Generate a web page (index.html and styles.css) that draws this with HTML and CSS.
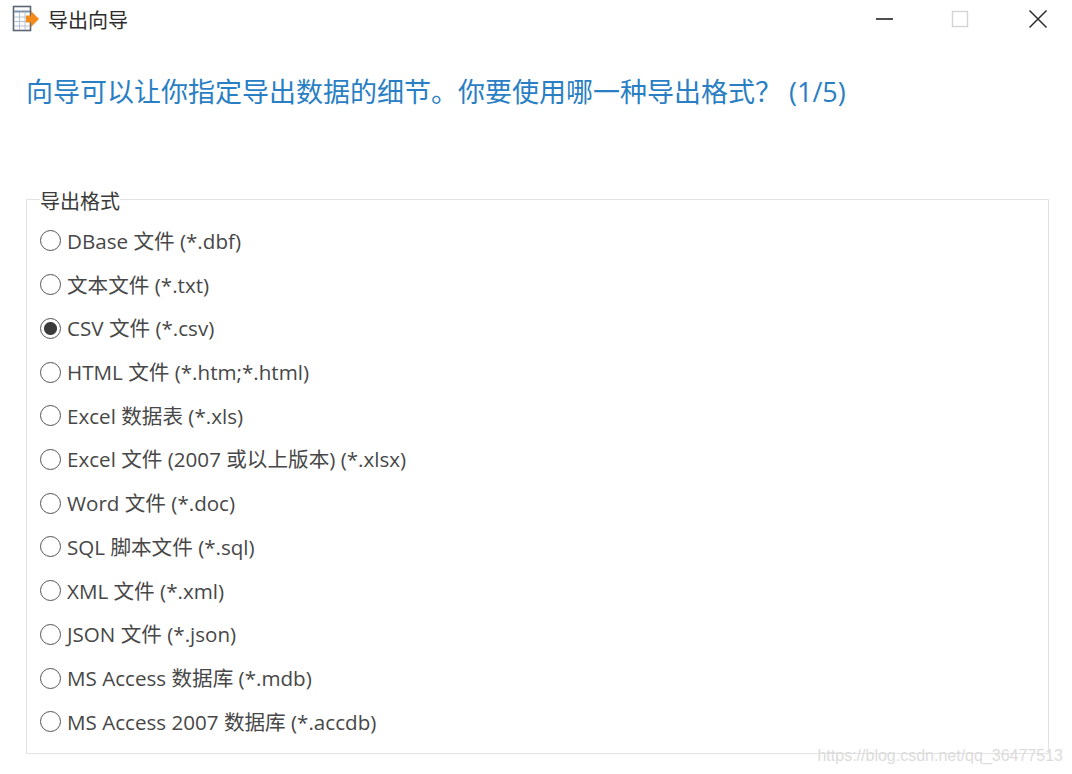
FILE: index.html
```html
<!DOCTYPE html>
<html lang="zh-CN">
<head>
<meta charset="utf-8">
<title>导出向导</title>
<link rel="stylesheet" href="styles.css">
</head>
<body>
<div class="window">
  <header class="titlebar">
    <svg class="app-icon" width="28" height="28" viewBox="0 0 28 28">
      <rect x="1.500" y="1.500" width="17" height="24" fill="#fff" stroke="#5b6571" stroke-width="1.600"/>
      <path d="M2 6.500h16" stroke="#7f93ab" stroke-width="2"/>
      <path d="M2 12h16M2 16.500h16M2 21h16M7.500 7v18M13 7v18" stroke="#b4c0cf" stroke-width="1"/>
      <path d="M14 10.500h5V6l8 8-8 8v-4.500h-5z" fill="#f28a1c"/>
    </svg>
    <span class="title">导出向导</span>
    <div class="controls">
      <svg class="ctl ctl-min" width="20" height="20" viewBox="0 0 20 20"><path d="M1 10h17" stroke="#222" stroke-width="1.600"/></svg>
      <svg class="ctl" width="20" height="20" viewBox="0 0 20 20"><rect x="2.500" y="2.500" width="15" height="15" fill="none" stroke="#d4d4d4" stroke-width="1.400"/></svg>
      <svg class="ctl" width="20" height="20" viewBox="0 0 20 20"><path d="M1.500 1.500l17 17M18.500 1.500l-17 17" fill="none" stroke="#2a2a2a" stroke-width="1.500"/></svg>
    </div>
  </header>
  <h1 class="heading">向导可以让你指定导出数据的细节。你要使用哪一种导出格式？ (1/5)</h1>
  <fieldset class="group">
    <legend class="legend">导出格式</legend>
    <label class="opt"><span class="radio"></span>DBase 文件 (*.dbf)</label>
    <label class="opt"><span class="radio"></span>文本文件 (*.txt)</label>
    <label class="opt"><span class="radio on"></span>CSV 文件 (*.csv)</label>
    <label class="opt"><span class="radio"></span>HTML 文件 (*.htm;*.html)</label>
    <label class="opt"><span class="radio"></span>Excel 数据表 (*.xls)</label>
    <label class="opt"><span class="radio"></span>Excel 文件 (2007 或以上版本) (*.xlsx)</label>
    <label class="opt"><span class="radio"></span>Word 文件 (*.doc)</label>
    <label class="opt"><span class="radio"></span>SQL 脚本文件 (*.sql)</label>
    <label class="opt"><span class="radio"></span>XML 文件 (*.xml)</label>
    <label class="opt"><span class="radio"></span>JSON 文件 (*.json)</label>
    <label class="opt"><span class="radio"></span>MS Access 数据库 (*.mdb)</label>
    <label class="opt"><span class="radio"></span>MS Access 2007 数据库 (*.accdb)</label>
  </fieldset>
  <div class="watermark">https://blog.csdn.net/qq_36477513</div>
</div>
</body>
</html>
```
FILE: styles.css
```css
* { box-sizing: border-box; }
html, body { margin: 0; padding: 0; background: #fff; }
body {
  width: 1072px;
  height: 774px;
  overflow: hidden;
  font-family: "Open Sans", "Noto Sans CJK SC", sans-serif;
}
.window { position: relative; width: 1072px; height: 774px; padding-left: 26px; }
.titlebar {
  display: flex;
  align-items: center;
  height: 40px;
  margin-left: -14px;
  padding: 0 24px 2px 0;
}
.app-icon { flex: none; }
.title { margin-left: 8px; font-size: 20px; color: #2b2b2b; }
.controls { margin-left: auto; display: flex; gap: 58px; }
.ctl-min { margin-right: -3px; }
.heading {
  margin: 33px 0 0 0;
  height: 38px;
  line-height: 38px;
  font-size: 27px;
  font-weight: 400;
  color: #2a7fc4;
  white-space: nowrap;
}
.group {
  width: 1023px;
  height: 571px;
  margin: 72px 0 0 0;
  padding: 0 0 0 13px;
  border: 1.500px solid #e2e2e2;
  display: flex;
  flex-direction: column;
}
.legend {
  padding: 6px 0 0 0;
  margin: 0 0 3px 0;
  font-size: 20px;
  line-height: 26px;
  color: #3a3a3a;
}
.opt {
  display: flex;
  align-items: center;
  height: 43.730px;
  font-size: 20.600px;
  color: #474747;
  white-space: nowrap;
}
.radio {
  flex: none;
  width: 21px;
  height: 21px;
  margin: 2px 6px 0 0;
  border: 1.500px solid #555;
  border-radius: 50%;
  background: #fff;
}
.radio.on { background: radial-gradient(circle, #3a3a3a 0 6px, #fff 7px); }
.watermark {
  position: absolute;
  right: 9px;
  top: 747px;
  font-size: 16px;
  color: #dcdcdc;
  font-family: "Liberation Sans", sans-serif;
}
```
